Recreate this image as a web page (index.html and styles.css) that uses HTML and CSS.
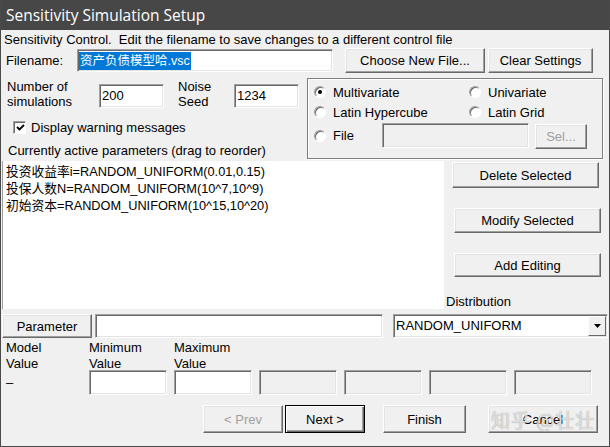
FILE: index.html
```html
<!DOCTYPE html>
<html>
<head>
<meta charset="utf-8">
<link rel="stylesheet" href="styles.css">
</head>
<body>
<div class="window">
  <div class="titlebar">Sensitivity Simulation Setup</div>
  <div class="content">
    <div class="intro">Sensitivity Control.&nbsp; Edit the filename to save changes to a different control file</div>

    <div class="file-row">
      <span class="lbl-file">Filename:</span>
      <div class="field field-file"><span class="sel">资产负债模型哈.vsc</span></div>
      <div class="btn btn-choose">Choose New File...</div>
      <div class="btn btn-clear">Clear Settings</div>
    </div>

    <div class="mid">
      <div class="mid-left">
        <div class="sims">
          <div class="lbl2 lbl-num">Number of<br>simulations</div>
          <div class="field f-num">200</div>
          <div class="lbl2 lbl-noise">Noise<br>Seed</div>
          <div class="field f-num">1234</div>
        </div>
        <div class="check-row">
          <span class="checkbox"><svg width="9" height="9" viewBox="0 0 9 9"><path d="M1 4 L3.5 6.5 L8 2" fill="none" stroke="#000" stroke-width="1.8"/></svg></span>
          <span>Display warning messages</span>
        </div>
        <div class="active-lbl">Currently active parameters (drag to reorder)</div>
      </div>

      <div class="group">
        <div class="g-row">
          <div class="opt opt-a"><span class="radio on"></span>Multivariate</div>
          <div class="opt"><span class="radio"></span>Univariate</div>
        </div>
        <div class="g-row">
          <div class="opt opt-a"><span class="radio"></span>Latin Hypercube</div>
          <div class="opt"><span class="radio"></span>Latin Grid</div>
        </div>
        <div class="g-row g-file">
          <div class="opt opt-file"><span class="radio"></span>File</div>
          <div class="field disabled f-path"></div>
          <div class="btn btn-sel disabled-text">Sel...</div>
        </div>
      </div>
    </div>

    <div class="list-area">
      <div class="list">
        <div class="item">投资收益率i=RANDOM_UNIFORM(0.01,0.15)</div>
        <div class="item">投保人数N=RANDOM_UNIFORM(10^7,10^9)</div>
        <div class="item">初始资本=RANDOM_UNIFORM(10^15,10^20)</div>
      </div>
      <div class="side">
        <div class="btn side-btn b-del">Delete Selected</div>
        <div class="btn side-btn b-mod">Modify Selected</div>
        <div class="btn side-btn b-add">Add Editing</div>
        <div class="dist-lbl">Distribution</div>
      </div>
    </div>

    <div class="param-row">
      <div class="btn btn-param">Parameter</div>
      <div class="field f-param"></div>
      <div class="field f-select">
        <span class="sel-text">RANDOM_UNIFORM</span>
        <span class="drop"><svg width="7" height="4" viewBox="0 0 7 4"><path d="M0 0 H7 L3.5 4 Z" fill="#000"/></svg></span>
      </div>
    </div>

    <div class="labels-row">
      <div class="lbl3 l-model">Model<br>Value</div>
      <div class="lbl3 l-min">Minimum<br>Value</div>
      <div class="lbl3">Maximum<br>Value</div>
    </div>

    <div class="inputs-row">
      <div class="dash">–</div>
      <div class="field f-val"></div>
      <div class="field f-val"></div>
      <div class="field f-val disabled"></div>
      <div class="field f-val disabled"></div>
      <div class="field f-val disabled"></div>
      <div class="field f-val disabled"></div>
    </div>

    <div class="nav-row">
      <div class="btn nav-btn b-prev disabled-text">&lt; Prev</div>
      <div class="btn nav-btn b-next default">Next &gt;</div>
      <div class="btn nav-btn b-finish">Finish</div>
      <div class="btn nav-btn b-cancel">Cancel<span class="watermark">知乎 @壮壮</span></div>
    </div>
  </div>
</div>
</body>
</html>
```

FILE: styles.css
```css
html, body {
  margin: 0;
  padding: 0;
  background: #f0f0f0;
}

.window {
  width: 610px;
  height: 447px;
  box-sizing: border-box;
  border: 1px solid #4a4a4a;
  border-top: none;
  background: #f0f0f0;
  font-family: "Liberation Sans", Arial, sans-serif;
  font-size: 13px;
  color: #000;
  overflow: hidden;
}

.titlebar {
  height: 30px;
  margin: 0 -1px;
  background: #474747;
  color: #ffffff;
  font-family: "Open Sans", "Noto Sans", sans-serif;
  font-size: 15.5px;
  line-height: 30px;
  padding-left: 6px;
  box-sizing: border-box;
}

.content {
  position: relative;
}

/* generic 3D controls */
.field {
  background: #fff;
  box-sizing: border-box;
  border: 1px solid;
  border-color: #a0a0a0 #ffffff #ffffff #a0a0a0;
  box-shadow: inset 1px 1px 0 #696969, inset -1px -1px 0 #e3e3e3;
}
.field.disabled {
  background: #f0f0f0;
}

.btn {
  box-sizing: border-box;
  background: #f0f0f0;
  border: 1px solid;
  border-color: #ffffff #696969 #696969 #ffffff;
  box-shadow: inset -1px -1px 0 #a0a0a0, inset 1px 1px 0 #e3e3e3;
  display: flex;
  align-items: center;
  justify-content: center;
  white-space: nowrap;
}
.btn.default {
  border: 1px solid #000;
  box-shadow: inset 1px 1px 0 #fff, inset -1px -1px 0 #696969, inset -2px -2px 0 #a0a0a0;
}
.disabled-text {
  color: #a0a0a0;
}

/* intro */
.intro {
  margin: 2px 0 0 3px;
  height: 16px;
  line-height: 16px;
  white-space: nowrap;
}

/* file row */
.file-row {
  display: flex;
  align-items: center;
  height: 25px;
}
.lbl-file {
  margin-left: 5px;
  width: 71px;
}
.field-file {
  width: 256px;
  height: 23px;
  padding: 2px 0 0 1px;
  display: flex;
  align-items: flex-start;
}
.sel {
  background: #0078d7;
  color: #fff;
  font-family: "Liberation Sans", "Noto Sans CJK SC", sans-serif;
  font-size: 12.5px;
  line-height: 18px;
  padding: 0 1px;
}
.btn-choose {
  width: 140px;
  height: 25px;
  margin-left: 12px;
}
.btn-clear {
  width: 105px;
  height: 25px;
  margin-left: 3px;
}

/* mid */
.mid {
  display: flex;
  margin-top: 5px;
  height: 81px;
}
.mid-left {
  width: 306px;
}
.sims {
  display: flex;
  align-items: flex-start;
  margin-top: 1px;
}
.lbl2 {
  line-height: 15px;
}
.lbl-num {
  margin-left: 6px;
  width: 92px;
}
.lbl-noise {
  margin-left: 14px;
  width: 56px;
}
.f-num {
  width: 65px;
  height: 24px;
  margin-top: 5px;
  padding: 3px 0 0 2px;
  line-height: 16px;
}
.check-row {
  display: flex;
  align-items: center;
  margin: 11px 0 0 12px;
  height: 14px;
}
.checkbox {
  width: 13px;
  height: 13px;
  box-sizing: border-box;
  background: #fff;
  border: 1px solid;
  border-color: #a0a0a0 #fff #fff #a0a0a0;
  box-shadow: inset 1px 1px 0 #696969;
  display: flex;
  align-items: center;
  justify-content: center;
  margin-right: 5px;
  padding: 1px 0 0 1px;
}
.checkbox svg {
  display: block;
}
.active-lbl {
  margin: 9px 0 0 7px;
  line-height: 15px;
  white-space: nowrap;
}

.group {
  width: 296px;
  height: 81px;
  box-sizing: border-box;
  border: 1px solid #7f7f7f;
  box-shadow: inset 1px 1px 0 #fff, 1px 1px 0 #fff;
  padding: 3px 0 0 6px;
}
.g-row {
  display: flex;
  align-items: center;
  height: 20px;
}
.g-file {
  height: 25px;
  margin-top: 1px;
}
.opt {
  display: flex;
  align-items: center;
  white-space: nowrap;
}
.opt-a {
  width: 155px;
}
.opt-file {
  width: 68px;
}
.radio {
  width: 12px;
  height: 12px;
  box-sizing: border-box;
  border-radius: 50%;
  background: #fff;
  border: 1px solid;
  border-color: #a0a0a0 #fff #fff #a0a0a0;
  box-shadow: inset 1px 1px 0 #696969;
  margin-right: 7px;
  position: relative;
}
.radio.on::after {
  content: "";
  position: absolute;
  left: 3px;
  top: 3px;
  width: 4px;
  height: 4px;
  border-radius: 50%;
  background: #000;
}
.f-path {
  width: 147px;
  height: 25px;
}
.btn-sel {
  width: 52px;
  height: 25px;
  margin-left: 6px;
  margin-top: 2px;
}

/* list area */
.list-area {
  display: flex;
  margin-top: 2px;
  height: 151px;
}
.list {
  margin-left: 1px;
  width: 442px;
  height: 148px;
  box-sizing: border-box;
  background: #fff;
  border-left: 1px solid #a0a0a0;
  padding: 2px 0 0 3px;
  font-family: "Liberation Sans", "Noto Sans CJK SC", sans-serif;
  font-size: 12.75px;
}
.item {
  height: 17px;
  line-height: 17px;
  white-space: nowrap;
}
.side {
  display: flex;
  flex-direction: column;
  margin-left: 8px;
}
.side-btn {
  width: 147px;
  height: 26px;
}
.b-del {
  margin-top: 1px;
}
.b-mod {
  margin: 20px 0 0 2px;
  height: 25px;
}
.b-add {
  margin: 20px 0 0 2px;
  height: 24px;
}
.dist-lbl {
  margin: 17px 0 0 -6px;
  line-height: 15px;
}

/* parameter row */
.param-row {
  display: flex;
  align-items: center;
  margin-top: 2px;
  height: 24px;
}
.btn-param {
  margin-left: 1px;
  width: 90px;
  height: 24px;
}
.f-param {
  width: 288px;
  height: 24px;
  margin-left: 3px;
}
.f-select {
  width: 215px;
  height: 24px;
  margin-left: 10px;
  display: flex;
  align-items: center;
  justify-content: space-between;
  padding: 0 1px 0 2px;
}
.sel-text {
  line-height: 16px;
}
.drop {
  width: 18px;
  height: 20px;
  box-sizing: border-box;
  background: #f0f0f0;
  border: 1px solid;
  border-color: #fff #696969 #696969 #fff;
  display: flex;
  align-items: center;
  justify-content: center;
}
.drop svg {
  display: block;
}

/* labels */
.labels-row {
  display: flex;
  margin-top: 2px;
  height: 30px;
}
.lbl3 {
  line-height: 16px;
}
.l-model {
  margin-left: 5px;
  width: 83px;
}
.l-min {
  width: 85px;
}

/* inputs */
.inputs-row {
  display: flex;
  align-items: center;
  gap: 7px;
  height: 25px;
}
.dash {
  margin-left: 5px;
  width: 76px;
}
.f-val {
  width: 78px;
  height: 25px;
}

/* nav */
.nav-row {
  display: flex;
  margin-top: 10px;
  height: 28px;
}
.nav-btn {
  height: 28px;
}
.b-prev {
  margin-left: 202px;
  width: 80px;
}
.b-next {
  margin-left: 2px;
  width: 80px;
}
.b-finish {
  margin-left: 18px;
  width: 83px;
}
.b-cancel {
  margin-left: 22px;
  width: 110px;
  position: relative;
}
.watermark {
  position: absolute;
  left: 2px;
  top: 2px;
  font-family: "Noto Sans CJK SC", sans-serif;
  font-size: 19px;
  line-height: 24px;
  color: rgba(236, 236, 236, 0.85);
  text-shadow: 0 0 1px #8a8a8a;
  white-space: nowrap;
  letter-spacing: 1px;
}
```
